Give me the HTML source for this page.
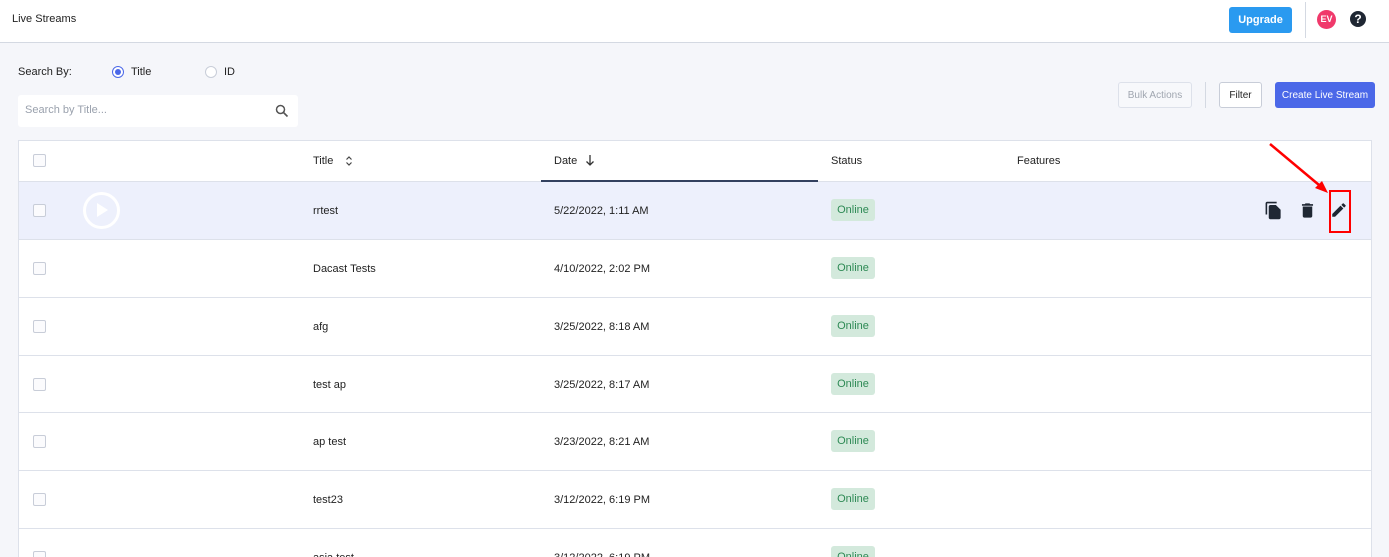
<!DOCTYPE html>
<html><head><meta charset="utf-8"><style>
*{margin:0;padding:0;box-sizing:border-box}
html,body{width:1389px;height:557px;overflow:hidden}
body{background:#f5f6fa;font-family:"Liberation Sans",sans-serif;font-size:11px;color:#222;position:relative}
.top{position:absolute;left:0;top:0;width:1389px;height:43px;background:#fff;border-bottom:1px solid #d4d9e2}
.a{position:absolute}
.btn{position:absolute;border-radius:3px;font-size:10px;display:flex;align-items:center;justify-content:center}
.tbl{position:absolute;left:18px;top:140px;width:1354px;height:440px;background:#fff;border:1px solid #dde1ea}
.row{position:absolute;left:0;width:1352px;border-bottom:1px solid #dde1ea;height:58px}
.cb{position:absolute;left:14px;width:13px;height:13px;border:1px solid #c8cdd8;border-radius:2px;background:#fbfbfd}
.cell{position:absolute;top:1px;line-height:57px}
.on{position:absolute;left:812px;top:17px;width:44px;height:22px;background:#d3e9dc;color:#2e8a55;border-radius:3px;font-size:11px;line-height:22px;text-align:center}
</style></head><body>
<div class="top">
<div class="a" style="left:12px;top:13px;font-size:11px">Live Streams</div>
<div class="btn" style="left:1229px;top:7px;width:63px;height:26px;background:#2a9af0;color:#fff;font-weight:bold;font-size:11px">Upgrade</div>
<div class="a" style="left:1305px;top:2px;width:1px;height:36px;background:#d4d9e2"></div>
<div class="a" style="left:1317px;top:10px;width:19px;height:19px;border-radius:50%;background:#f0396b;color:#fff;font-size:9px;font-weight:bold;text-align:center;line-height:19px">EV</div>
<div class="a" style="left:1350px;top:11px;width:16px;height:16px;border-radius:50%;background:#1f2733;color:#fff;font-size:12px;font-weight:bold;text-align:center;line-height:16px">?</div>
</div>
<div class="a" style="left:18px;top:66px">Search By:</div>
<div class="a" style="left:112px;top:66px;width:12px;height:12px;border-radius:50%;border:1px solid #4b68e8;background:#fff"><div style="margin:2px;width:6px;height:6px;border-radius:50%;background:#4b68e8"></div></div>
<div class="a" style="left:131px;top:66px">Title</div>
<div class="a" style="left:205px;top:66px;width:12px;height:12px;border-radius:50%;border:1px solid #c8cdd8;background:#fff"></div>
<div class="a" style="left:224px;top:66px">ID</div>
<div class="a" style="left:18px;top:95px;width:280px;height:32px;background:#fff;border-radius:3px"><span style="position:absolute;left:7px;top:9px;color:#9aa1ad">Search by Title...</span>
<svg style="position:absolute;left:257px;top:9px" width="14" height="14" viewBox="0 0 14 14"><circle cx="5.5" cy="5.5" r="4" fill="none" stroke="#555" stroke-width="1.5"/><path d="M8.5 8.5L12.5 12.5" stroke="#555" stroke-width="1.6"/></svg></div>
<div class="btn" style="left:1118px;top:82px;width:74px;height:26px;border:1px solid #dde1ea;color:#a0a6b0;background:#f7f8fb">Bulk Actions</div>
<div class="a" style="left:1205px;top:82px;width:1px;height:26px;background:#d4d9e2"></div>
<div class="btn" style="left:1219px;top:82px;width:43px;height:26px;border:1px solid #c8cdd8;background:#fff;color:#222">Filter</div>
<div class="btn" style="left:1275px;top:82px;width:100px;height:26px;background:#4b68e8;color:#fff">Create Live Stream</div>
<div class="tbl">
<div class="row" style="top:0;height:41px"><div class="cb" style="top:13px"></div>
<div class="a" style="left:294px;top:14px">Title</div>
<svg class="a" style="left:326px;top:14px" width="8" height="12"><path d="M1.5 4.5L4 2L6.5 4.5M1.5 7.5L4 10L6.5 7.5" fill="none" stroke="#444" stroke-width="1.2"/></svg>
<div class="a" style="left:535px;top:14px">Date</div>
<svg class="a" style="left:566px;top:13px" width="10" height="12"><path d="M5 1V11M1.5 7.5L5 11L8.5 7.5" fill="none" stroke="#333" stroke-width="1.3"/></svg>
<div class="a" style="left:522px;top:39px;width:277px;height:2px;background:#33415f"></div>
<div class="a" style="left:812px;top:14px">Status</div>
<div class="a" style="left:998px;top:14px">Features</div></div>
<div class="row" style="top:41px;background:#edf0fc"><div class="cb" style="top:22px"></div>
<div class="a" style="left:64px;top:10px;width:37px;height:37px;border-radius:50%;border:3px solid #fff"><svg style="position:absolute;left:10px;top:8px" width="12" height="14"><path d="M1 0L12 7L1 14Z" fill="#fff"/></svg></div>
<div class="cell" style="left:294px">rrtest</div><div class="cell" style="left:535px">5/22/2022, 1:11 AM</div><div class="on">Online</div>
<svg class="a" style="left:1245px;top:19px" width="19" height="19" viewBox="0 0 24 24"><path fill="#1f2733" d="M16 1H4c-1.1 0-2 .9-2 2v14h2V3h12V1zm-1 4l6 6v10c0 1.1-.9 2-2 2H8c-1.1 0-2-.9-2-2V7c0-1.1.9-2 2-2h7z"/></svg>
<svg class="a" style="left:1279px;top:19px" width="19" height="19" viewBox="0 0 24 24"><path fill="#1f2733" d="M6 19c0 1.1.9 2 2 2h8c1.1 0 2-.9 2-2V7H6v12zM19 4h-3.5l-1-1h-5l-1 1H5v2h14V4z"/></svg>
<svg class="a" style="left:1311px;top:19px" width="18" height="18" viewBox="0 0 24 24"><path fill="#1f2733" d="M3 17.25V21h3.75L17.81 9.94l-3.75-3.75L3 17.25zM20.71 7.04a1 1 0 000-1.41l-2.34-2.34a1 1 0 00-1.41 0l-1.83 1.83 3.75 3.75 1.83-1.83z"/></svg>
<div class="a" style="left:1310px;top:8px;width:22px;height:43px;border:2.5px solid #f00"></div>
</div>
<div class="row" style="top:99px"><div class="cb" style="top:22px"></div><div class="cell" style="left:294px">Dacast Tests</div><div class="cell" style="left:535px">4/10/2022, 2:02 PM</div><div class="on">Online</div></div>
<div class="row" style="top:157px"><div class="cb" style="top:22px"></div><div class="cell" style="left:294px">afg</div><div class="cell" style="left:535px">3/25/2022, 8:18 AM</div><div class="on">Online</div></div>
<div class="row" style="top:215px;height:57px"><div class="cb" style="top:22px"></div><div class="cell" style="left:294px">test ap</div><div class="cell" style="left:535px">3/25/2022, 8:17 AM</div><div class="on">Online</div></div>
<div class="row" style="top:272px"><div class="cb" style="top:22px"></div><div class="cell" style="left:294px">ap test</div><div class="cell" style="left:535px">3/23/2022, 8:21 AM</div><div class="on">Online</div></div>
<div class="row" style="top:330px"><div class="cb" style="top:22px"></div><div class="cell" style="left:294px">test23</div><div class="cell" style="left:535px">3/12/2022, 6:19 PM</div><div class="on">Online</div></div>
<div class="row" style="top:388px"><div class="cb" style="top:22px"></div><div class="cell" style="left:294px">asia test</div><div class="cell" style="left:535px">3/12/2022, 6:19 PM</div><div class="on">Online</div></div>
</div>
<svg class="a" style="left:1265px;top:140px" width="70" height="56"><path d="M5 4L60 50" stroke="#f00" stroke-width="2.5"/><path d="M63 53L50 48L57 41Z" fill="#f00"/></svg>
</body></html>
